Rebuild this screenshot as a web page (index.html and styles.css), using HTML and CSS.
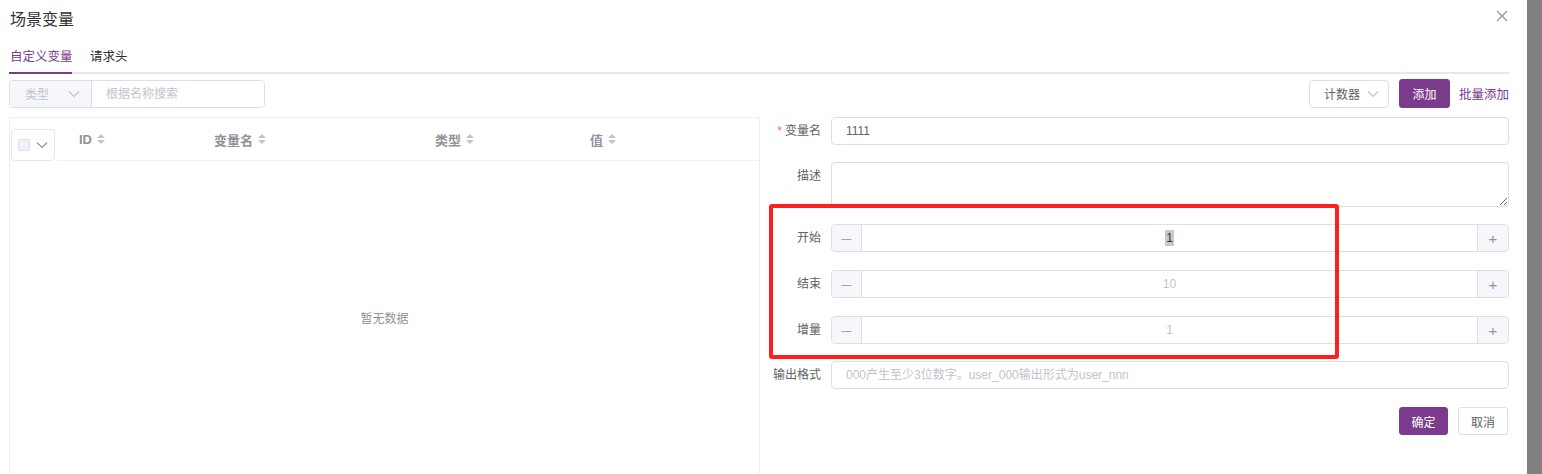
FILE: index.html
```html
<!DOCTYPE html>
<html lang="zh-CN">
<head>
    <meta charset="UTF-8">
    <meta name="viewport" content="width=device-width, initial-scale=1.0">
    <title>场景变量</title>
    <link rel="stylesheet" href="styles.css">
</head>
<body>
    <div class="page">
        <div class="dialog">
            <div class="dialog-header">
                <span class="dialog-title">场景变量</span>
                <svg class="close-icon" width="12" height="12" viewBox="0 0 12 12">
                    <path d="M1 1 L11 11 M11 1 L1 11" stroke="#909399" stroke-width="1.2" fill="none"/>
                </svg>
            </div>

            <div class="tabs">
                <div class="tab active">自定义变量</div>
                <div class="tab">请求头</div>
            </div>

            <div class="toolbar">
                <div class="search-group">
                    <div class="type-select">
                        <span>类型</span>
                        <svg class="chevron" width="12" height="8" viewBox="0 0 12 8"><path d="M1 1.5 L6 6.5 L11 1.5" stroke="#c0c4cc" stroke-width="1.1" fill="none"/></svg>
                    </div>
                    <input class="search-input" type="text" placeholder="根据名称搜索">
                </div>
                <div class="toolbar-right">
                    <div class="counter-select">
                        <span>计数器</span>
                        <svg class="chevron" width="12" height="8" viewBox="0 0 12 8"><path d="M1 1.5 L6 6.5 L11 1.5" stroke="#c0c4cc" stroke-width="1.1" fill="none"/></svg>
                    </div>
                    <button class="btn-primary add-btn">添加</button>
                    <a class="batch-link" href="#">批量添加</a>
                </div>
            </div>

            <div class="content">
                <div class="var-table">
                    <div class="table-head">
                        <div class="cell cell-check">
                            <div class="check-box">
                                <span class="checkbox"></span>
                                <svg width="12" height="8" viewBox="0 0 12 8"><path d="M1 1.5 L6 6.5 L11 1.5" stroke="#909399" stroke-width="1.1" fill="none"/></svg>
                            </div>
                        </div>
                        <div class="cell cell-id">ID <span class="caret"></span></div>
                        <div class="cell cell-name">变量名 <span class="caret"></span></div>
                        <div class="cell cell-type">类型 <span class="caret"></span></div>
                        <div class="cell cell-value">值 <span class="caret"></span></div>
                    </div>
                    <div class="table-empty">暂无数据</div>
                </div>

                <div class="var-form">
                    <div class="form-item tight">
                        <label class="form-label"><span class="required">*</span>变量名</label>
                        <input class="form-input" type="text" value="1111">
                    </div>
                    <div class="form-item tight">
                        <label class="form-label">描述</label>
                        <textarea class="form-textarea"></textarea>
                    </div>
                    <div class="form-item">
                        <label class="form-label">开始</label>
                        <div class="number-input">
                            <span class="num-btn minus">—</span>
                            <div class="num-value"><span class="selected">1</span></div>
                            <span class="num-btn plus">+</span>
                        </div>
                    </div>
                    <div class="form-item">
                        <label class="form-label">结束</label>
                        <div class="number-input">
                            <span class="num-btn minus">—</span>
                            <input class="num-field" type="text" placeholder="10">
                            <span class="num-btn plus">+</span>
                        </div>
                    </div>
                    <div class="form-item tight">
                        <label class="form-label">增量</label>
                        <div class="number-input">
                            <span class="num-btn minus">—</span>
                            <input class="num-field" type="text" placeholder="1">
                            <span class="num-btn plus">+</span>
                        </div>
                    </div>
                    <div class="form-item">
                        <label class="form-label">输出格式</label>
                        <input class="form-input" type="text" placeholder="000产生至少3位数字。user_000输出形式为user_nnn">
                    </div>
                    <div class="form-actions">
                        <button class="btn-primary">确定</button>
                        <button class="btn-default">取消</button>
                    </div>
                </div>
            </div>

            <div class="highlight-box"></div>
        </div>
        <div class="side-strip"></div>
    </div>
</body>
</html>
```

FILE: styles.css
```css
* {
    box-sizing: border-box;
}
body {
    margin: 0;
    font-family: 'Liberation Sans', 'Noto Sans CJK SC', sans-serif;
    color: #606266;
    background: #fff;
    overflow: hidden;
}
.page {
    display: flex;
    height: 474px;
}
.dialog {
    position: relative;
    width: 1527px;
    padding: 0 18px 0 9px;
    background: #fff;
}
.side-strip {
    flex: 1;
    background: #808080;
}
.dialog-header {
    display: flex;
    justify-content: space-between;
    align-items: center;
    height: 36px;
    padding-left: 1px;
}
.dialog-title {
    font-size: 16px;
    color: #303133;
}
.close-icon {
    margin-right: 1px;
    margin-top: -4px;
}
.tabs {
    display: flex;
    gap: 18px;
    height: 38px;
    border-bottom: 2px solid #e4e7ed;
}
.tab {
    font-size: 12.5px;
    color: #303133;
    padding-top: 10px;
    white-space: nowrap;
}
.tab.active {
    color: #7b3b8c;
    border-bottom: 2px solid #7b3b8c;
    margin-bottom: -2px;
    width: 63px;
    padding-left: 1px;
}
.toolbar {
    display: flex;
    justify-content: space-between;
    align-items: center;
    margin-top: 5px;
    height: 29px;
}
.search-group {
    display: flex;
    height: 28px;
    border: 1px solid #dcdfe6;
    border-radius: 4px;
    overflow: hidden;
}
.type-select {
    display: flex;
    align-items: center;
    justify-content: space-between;
    width: 82px;
    padding: 0 11px 0 15px;
    background: #f5f7fa;
    border-right: 1px solid #dcdfe6;
    font-size: 12px;
    color: #c0c4cc;
}
.search-input {
    width: 172px;
    border: none;
    outline: none;
    padding: 0 14px;
    font-size: 12px;
    font-family: inherit;
}
.search-input::placeholder,
.form-input::placeholder,
.num-field::placeholder {
    color: #c0c4cc;
}
.toolbar-right {
    display: flex;
    align-items: center;
}
.counter-select {
    display: flex;
    align-items: center;
    justify-content: space-between;
    width: 80px;
    height: 28px;
    padding: 0 9px 0 14px;
    border: 1px solid #dcdfe6;
    border-radius: 4px;
    font-size: 12px;
    color: #606266;
}
.btn-primary {
    height: 28px;
    padding: 0;
    border: 1px solid #7b3b8c;
    background: #7b3b8c;
    color: #fff;
    border-radius: 3px;
    font-size: 12px;
    font-family: inherit;
    white-space: nowrap;
}
.add-btn {
    margin-left: 10px;
    height: 29px;
    width: 51px;
}
.batch-link {
    margin-left: 9px;
    color: #7b3b8c;
    font-size: 12.5px;
    text-decoration: none;
}
.content {
    display: flex;
    gap: 9px;
    margin-top: 9px;
}
.var-table {
    width: 751px;
    height: 360px;
    border: 1px solid #ebeef5;
    border-bottom: none;
}
.table-head {
    display: flex;
    height: 43px;
    font-size: 13px;
    font-weight: bold;
    color: #909399;
}
.cell {
    display: flex;
    align-items: center;
    gap: 4px;
    padding-left: 10px;
    border-bottom: 1px solid #ebeef5;
}
.cell-check {
    width: 47px;
    padding: 10px 0 0 1px;
    border-bottom: none;
}
.check-box {
    display: flex;
    align-items: center;
    justify-content: space-between;
    width: 44px;
    height: 32px;
    padding: 0 6px 0 6px;
    border: 1px solid #e4e7ed;
    border-radius: 4px;
}
.checkbox {
    width: 12px;
    height: 12px;
    border: 1px solid #dcdfe6;
    background: #edf2fc;
    border-radius: 2px;
}
.cell-id { width: 147px; padding-left: 22px; }
.cell-name { width: 221px; }
.cell-type { width: 155px; }
.cell-value { flex: 1; }
.caret {
    position: relative;
    width: 10px;
    height: 12px;
}
.caret::before,
.caret::after {
    content: '';
    position: absolute;
    left: 1px;
    border-left: 4px solid transparent;
    border-right: 4px solid transparent;
}
.caret::before {
    top: 1px;
    border-bottom: 4px solid #c0c4cc;
}
.caret::after {
    top: 7px;
    border-top: 4px solid #c0c4cc;
}
.table-empty {
    display: flex;
    align-items: center;
    justify-content: center;
    height: 312px;
    font-size: 12px;
    color: #909399;
}
.var-form {
    flex: 1;
}
.form-item {
    display: flex;
    align-items: flex-start;
    margin-bottom: 18px;
}
.form-item.tight {
    margin-bottom: 17px;
}
.form-label {
    width: 62px;
    padding-right: 10px;
    text-align: right;
    font-size: 12px;
    line-height: 28px;
    color: #606266;
    white-space: nowrap;
}
.required {
    color: #f56c6c;
    margin-right: 3px;
}
.form-input {
    flex: 1;
    height: 28px;
    border: 1px solid #dcdfe6;
    border-radius: 4px;
    padding: 0 14px;
    font-size: 12px;
    font-family: inherit;
    color: #606266;
    outline: none;
}
.form-textarea {
    flex: 1;
    height: 45px;
    border: 1px solid #dcdfe6;
    border-radius: 4px;
    outline: none;
    font-family: inherit;
}
.number-input {
    flex: 1;
    display: flex;
    height: 28px;
    border: 1px solid #dcdfe6;
    border-radius: 4px;
    overflow: hidden;
}
.num-btn {
    display: flex;
    align-items: center;
    justify-content: center;
    width: 30px;
    background: #f5f7fa;
    color: #909399;
    font-size: 13px;
}
.num-btn.minus {
    border-right: 1px solid #dcdfe6;
    font-size: 10px;
}
.num-btn.plus {
    width: 31px;
    border-left: 1px solid #dcdfe6;
    font-size: 15px;
}
.num-value,
.num-field {
    flex: 1;
    display: flex;
    align-items: center;
    justify-content: center;
    text-align: center;
    font-size: 12px;
    color: #606266;
    border: none;
    outline: none;
    font-family: inherit;
}
.selected {
    background: #c8c8c8;
    color: #333;
    padding: 1px 1px;
}
.form-actions {
    display: flex;
    justify-content: flex-end;
    gap: 10px;
    padding-right: 1px;
}
.form-actions .btn-primary {
    width: 49px;
}
.btn-default {
    width: 50px;
    height: 28px;
    border: 1px solid #dcdfe6;
    background: #fff;
    color: #606266;
    border-radius: 3px;
    font-size: 12px;
    font-family: inherit;
}
.highlight-box {
    position: absolute;
    left: 769px;
    top: 204px;
    width: 570px;
    height: 155px;
    border: 4px solid #ff1f1f;
    border-radius: 3px;
    pointer-events: none;
}
```
